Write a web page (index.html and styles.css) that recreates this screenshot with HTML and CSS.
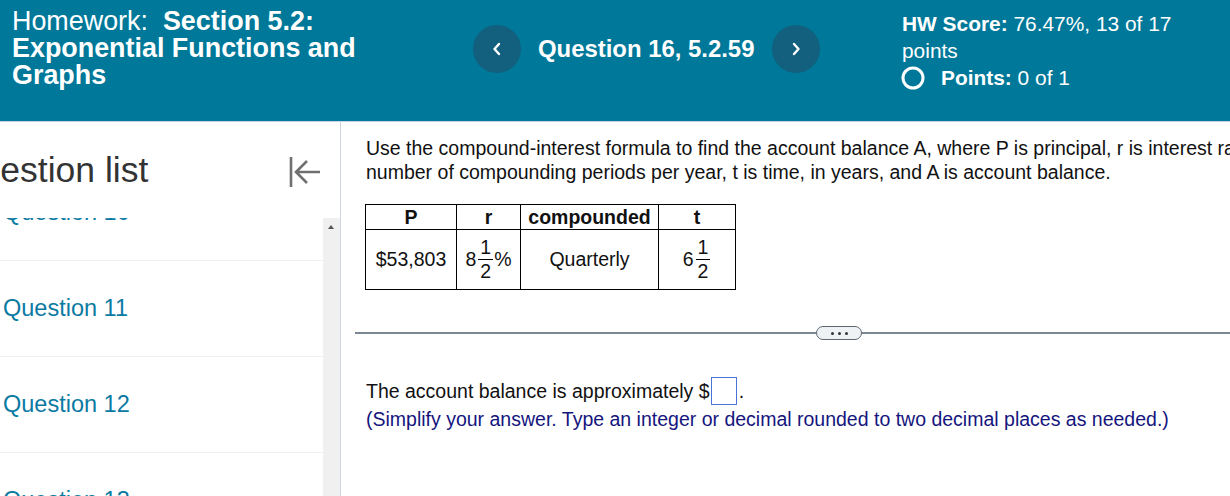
FILE: index.html
```html
<!DOCTYPE html>
<html>
<head>
<meta charset="utf-8">
<link rel="stylesheet" href="styles.css">
</head>
<body>
<div class="page">
  <header class="topbar">
    <div class="title"><span class="title-label">Homework:</span>&nbsp; <b>Section 5.2: Exponential Functions and Graphs</b></div>
    <nav class="qnav">
      <button class="navbtn" aria-label="Previous question">
        <svg width="12" height="14" viewBox="0 0 12 14"><path d="M8 2 L3.5 7 L8 12" fill="none" stroke="#fff" stroke-width="2.4" stroke-linecap="round" stroke-linejoin="round"/></svg>
      </button>
      <span class="qtitle">Question 16, 5.2.59</span>
      <button class="navbtn" aria-label="Next question">
        <svg width="12" height="14" viewBox="0 0 12 14"><path d="M4 2 L8.5 7 L4 12" fill="none" stroke="#fff" stroke-width="2.4" stroke-linecap="round" stroke-linejoin="round"/></svg>
      </button>
    </nav>
    <div class="score">
      <div class="hw"><b>HW Score:</b> 76.47%, 13 of 17 points</div>
      <div class="pts">
        <svg class="ring" width="24" height="24" viewBox="0 0 24 24"><circle cx="12" cy="12" r="10" fill="none" stroke="#fff" stroke-width="3"/></svg>
        <span><b>Points:</b> 0 of 1</span>
      </div>
    </div>
  </header>
  <div class="main">
    <aside class="sidebar">
      <div class="side-head">
        <h2 class="side-title">Question list</h2>
        <svg class="collapse" width="34" height="34" viewBox="0 0 34 34"><path d="M3 3 V33 M32 18 H9 M19 7 L8 18 L19 29" fill="none" stroke="#707070" stroke-width="2.6"/></svg>
      </div>
      <div class="list-wrap">
        <div class="list">
          <div class="list-inner">
            <div class="item">Question 10</div>
            <div class="item">Question 11</div>
            <div class="item">Question 12</div>
            <div class="item">Question 13</div>
          </div>
        </div>
        <div class="scrollbar"><span class="arrow"></span></div>
      </div>
    </aside>
    <section class="content">
      <p class="prompt">Use the compound-interest formula to find the account balance A, where P is principal, r is interest rate, n is the<br>number of compounding periods per year, t is time, in years, and A is account balance.</p>
      <table class="data">
        <tr><th class="c1">P</th><th class="c2">r</th><th class="c3">compounded</th><th class="c4">t</th></tr>
        <tr>
          <td>$53,803</td>
          <td><span class="mixed">8<span class="frac"><span class="num">1</span><span class="den">2</span></span>%</span></td>
          <td>Quarterly</td>
          <td><span class="mixed">6<span class="frac"><span class="num">1</span><span class="den">2</span></span></span></td>
        </tr>
      </table>
      <div class="divider">
        <span class="rule"></span>
        <span class="pill"><i></i><i></i><i></i></span>
        <span class="rule"></span>
      </div>
      <div class="answer">
        <div class="ans-line">The account balance is approximately $<span class="box"></span>.</div>
        <div class="hint">(Simplify your answer. Type an integer or decimal rounded to two decimal places as needed.)</div>
      </div>
    </section>
  </div>
</div>
</body>
</html>
```

FILE: styles.css
```css
* { box-sizing: border-box; }
html, body { margin: 0; padding: 0; }
body {
  width: 1230px;
  height: 496px;
  overflow: hidden;
  background: #fff;
  font-family: "Liberation Sans", Arial, sans-serif;
  color: #1a1a1a;
}
.page { width: 1230px; height: 496px; overflow: hidden; }

.topbar {
  height: 122px;
  background: #007899;
  border-bottom: 1px solid #c6d4e3;
  color: #fff;
  display: grid;
  grid-template-columns: 473px 429px 1fr;
  align-items: start;
}
.title {
  padding: 8px 0 0 12px;
  width: 400px;
  font-size: 26.9px;
  line-height: 27px;
}
.title b { font-weight: 700; }
.qnav {
  display: flex;
  align-items: center;
  margin-top: 25px;
}
.navbtn {
  width: 48px;
  height: 48px;
  border-radius: 50%;
  border: none;
  background: #125f7e;
  display: flex;
  align-items: center;
  justify-content: center;
  padding: 0;
}
.qtitle {
  font-weight: 700;
  font-size: 23.9px;
  margin: 0 18px 0 17px;
  white-space: nowrap;
}
.score {
  padding-top: 10px;
  font-size: 20.9px;
  line-height: 27px;
  width: 296px;
}
.pts {
  display: flex;
  align-items: center;
  gap: 16px;
}
.ring { flex: none; margin-left: -1px; }

.main { display: flex; height: 374px; }
.sidebar {
  width: 341px;
  flex: none;
  border-right: 1px solid #cfd6e2;
  display: flex;
  flex-direction: column;
}
.side-head {
  height: 96px;
  display: flex;
  align-items: center;
  justify-content: space-between;
  padding: 0 18px 0 0;
  overflow: hidden;
}
.side-title {
  margin: 0 0 0 -47px;
  font-weight: 400;
  font-size: 35.5px;
  color: #333;
  white-space: nowrap;
  padding-top: 0;
}
.collapse { margin-top: 2px; }
.list-wrap { flex: 1; display: flex; overflow: hidden; }
.list { flex: 1; overflow: hidden; }
.list-inner { margin-top: -53px; }
.item {
  height: 96px;
  border-bottom: 1px solid #eef0f2;
  display: flex;
  align-items: center;
  padding-left: 3px;
  font-size: 23.5px;
  color: #0b7aa2;
}
.scrollbar {
  width: 17px;
  flex: none;
  background: #f0f0f0;
  position: relative;
}
.arrow {
  position: absolute;
  left: 5px;
  top: 7px;
  width: 0;
  height: 0;
  border-left: 3.5px solid transparent;
  border-right: 3.5px solid transparent;
  border-bottom: 4px solid #555;
}

.content {
  flex: 1;
  padding: 14px 0 0 0;
  font-size: 19.5px;
  color: #111;
  overflow: hidden;
}
.prompt {
  margin: 0 0 0 25px;
  line-height: 24px;
  white-space: nowrap;
}
.data {
  margin: 20px 0 0 24px;
  border-collapse: collapse;
  font-size: 19.5px;
}
.data th, .data td {
  border: 1.5px solid #000;
  text-align: center;
  padding: 0;
}
.data th { height: 25px; font-weight: 700; }
.data td { height: 60px; }
.c1 { width: 91px; }
.c2 { width: 64px; }
.c3 { width: 138px; }
.c4 { width: 77px; }
.mixed { display: inline-flex; align-items: center; }
.frac {
  display: inline-flex;
  flex-direction: column;
  align-items: center;
  margin: 0 1px 0 2px;
  line-height: 23px;
}
.num { display: block; border-bottom: 1.5px solid #000; padding: 0 2px 0; }
.den { display: block; padding-top: 0; }

.divider {
  display: flex;
  align-items: center;
  margin: 36px 0 0 14px;
}
.rule { height: 1.5px; background: #7d8794; flex: 1; }
.rule:first-child { flex: none; width: 461px; }
.pill {
  width: 46px;
  height: 14px;
  border: 1px solid #5f6873;
  border-radius: 7px;
  background: #eef2f5;
  display: flex;
  align-items: center;
  justify-content: center;
  gap: 4px;
}
.pill i { width: 3px; height: 3px; border-radius: 50%; background: #333; }

.answer { margin: 37px 0 0 25px; }
.ans-line { line-height: 28px; display: flex; align-items: center; }
.box {
  display: inline-block;
  width: 26px;
  height: 28px;
  border: 1px solid #4a74d4;
  margin: 0 2px 0 1px;
}
.hint { color: #15157e; line-height: 28px; }
```
